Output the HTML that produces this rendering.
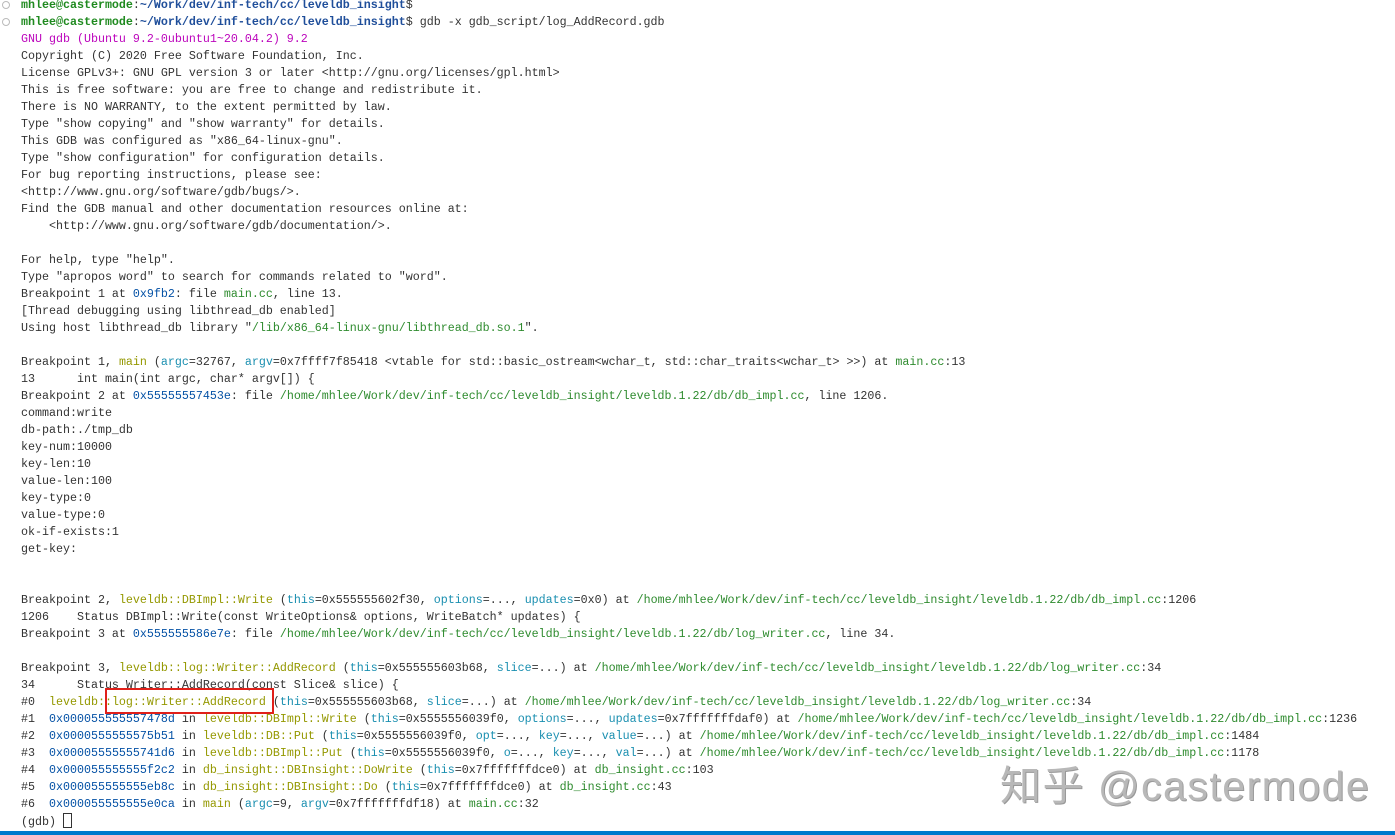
<!DOCTYPE html>
<html><head><meta charset="utf-8"><style>
html,body{margin:0;padding:0;background:#fff;width:1395px;height:835px;overflow:hidden;position:relative}
pre{position:absolute;left:21px;top:-3px;margin:0;font-family:"Liberation Mono",monospace;font-size:11.67px;line-height:17px;color:#333}
.y{color:#949800}.b{color:#0451a5}.g{color:#2e8b2e}.c{color:#1a8fb0}.m{color:#bc05bc}
.u{color:#1f8a1f;font-weight:bold}.p{color:#1f4e9a;font-weight:bold}
.dot{position:absolute;left:2px;width:6px;height:6px;border:1px solid #bbb;border-radius:50%}
.box{position:absolute;left:105px;top:688px;width:165px;height:22px;border:2px solid #e0201a}
.wm{position:absolute;left:1000px;top:752px;font-family:"Liberation Sans","Noto Sans CJK SC",sans-serif;font-size:41px;color:#b8b8b8;text-shadow:1px 1px 0 #999;letter-spacing:1.5px}
.bar{position:absolute;left:0;top:831px;width:1395px;height:4px;background:#007acc}
.cur{display:inline-block;width:7px;height:13px;border:1px solid #333;vertical-align:-3px}
</style></head><body>
<div class="dot" style="top:1px"></div><div class="dot" style="top:18px"></div>
<pre><span class="u">mhlee@castermode</span>:<span class="p">~/Work/dev/inf-tech/cc/leveldb_insight</span>$
<span class="u">mhlee@castermode</span>:<span class="p">~/Work/dev/inf-tech/cc/leveldb_insight</span>$ gdb -x gdb_script/log_AddRecord.gdb
<span class="m">GNU gdb (Ubuntu 9.2-0ubuntu1~20.04.2) 9.2</span>
Copyright (C) 2020 Free Software Foundation, Inc.
License GPLv3+: GNU GPL version 3 or later &lt;http://gnu.org/licenses/gpl.html&gt;
This is free software: you are free to change and redistribute it.
There is NO WARRANTY, to the extent permitted by law.
Type "show copying" and "show warranty" for details.
This GDB was configured as "x86_64-linux-gnu".
Type "show configuration" for configuration details.
For bug reporting instructions, please see:
&lt;http://www.gnu.org/software/gdb/bugs/&gt;.
Find the GDB manual and other documentation resources online at:
    &lt;http://www.gnu.org/software/gdb/documentation/&gt;.

For help, type "help".
Type "apropos word" to search for commands related to "word".
Breakpoint 1 at <span class="b">0x9fb2</span>: file <span class="g">main.cc</span>, line 13.
[Thread debugging using libthread_db enabled]
Using host libthread_db library "<span class="g">/lib/x86_64-linux-gnu/libthread_db.so.1</span>".

Breakpoint 1, <span class="y">main</span> (<span class="c">argc</span>=32767, <span class="c">argv</span>=0x7ffff7f85418 &lt;vtable for std::basic_ostream&lt;wchar_t, std::char_traits&lt;wchar_t&gt; &gt;&gt;) at <span class="g">main.cc</span>:13
13      int main(int argc, char* argv[]) {
Breakpoint 2 at <span class="b">0x55555557453e</span>: file <span class="g">/home/mhlee/Work/dev/inf-tech/cc/leveldb_insight/leveldb.1.22/db/db_impl.cc</span>, line 1206.
command:write
db-path:./tmp_db
key-num:10000
key-len:10
value-len:100
key-type:0
value-type:0
ok-if-exists:1
get-key:


Breakpoint 2, <span class="y">leveldb::DBImpl::Write</span> (<span class="c">this</span>=0x555555602f30, <span class="c">options</span>=..., <span class="c">updates</span>=0x0) at <span class="g">/home/mhlee/Work/dev/inf-tech/cc/leveldb_insight/leveldb.1.22/db/db_impl.cc</span>:1206
1206    Status DBImpl::Write(const WriteOptions&amp; options, WriteBatch* updates) {
Breakpoint 3 at <span class="b">0x555555586e7e</span>: file <span class="g">/home/mhlee/Work/dev/inf-tech/cc/leveldb_insight/leveldb.1.22/db/log_writer.cc</span>, line 34.

Breakpoint 3, <span class="y">leveldb::log::Writer::AddRecord</span> (<span class="c">this</span>=0x555555603b68, <span class="c">slice</span>=...) at <span class="g">/home/mhlee/Work/dev/inf-tech/cc/leveldb_insight/leveldb.1.22/db/log_writer.cc</span>:34
34      Status Writer::AddRecord(const Slice&amp; slice) {
#0  <span class="y">leveldb::log::Writer::AddRecord</span> (<span class="c">this</span>=0x555555603b68, <span class="c">slice</span>=...) at <span class="g">/home/mhlee/Work/dev/inf-tech/cc/leveldb_insight/leveldb.1.22/db/log_writer.cc</span>:34
#1  <span class="b">0x000055555557478d</span> in <span class="y">leveldb::DBImpl::Write</span> (<span class="c">this</span>=0x5555556039f0, <span class="c">options</span>=..., <span class="c">updates</span>=0x7fffffffdaf0) at <span class="g">/home/mhlee/Work/dev/inf-tech/cc/leveldb_insight/leveldb.1.22/db/db_impl.cc</span>:1236
#2  <span class="b">0x0000555555575b51</span> in <span class="y">leveldb::DB::Put</span> (<span class="c">this</span>=0x5555556039f0, <span class="c">opt</span>=..., <span class="c">key</span>=..., <span class="c">value</span>=...) at <span class="g">/home/mhlee/Work/dev/inf-tech/cc/leveldb_insight/leveldb.1.22/db/db_impl.cc</span>:1484
#3  <span class="b">0x00005555555741d6</span> in <span class="y">leveldb::DBImpl::Put</span> (<span class="c">this</span>=0x5555556039f0, <span class="c">o</span>=..., <span class="c">key</span>=..., <span class="c">val</span>=...) at <span class="g">/home/mhlee/Work/dev/inf-tech/cc/leveldb_insight/leveldb.1.22/db/db_impl.cc</span>:1178
#4  <span class="b">0x000055555555f2c2</span> in <span class="y">db_insight::DBInsight::DoWrite</span> (<span class="c">this</span>=0x7fffffffdce0) at <span class="g">db_insight.cc</span>:103
#5  <span class="b">0x000055555555eb8c</span> in <span class="y">db_insight::DBInsight::Do</span> (<span class="c">this</span>=0x7fffffffdce0) at <span class="g">db_insight.cc</span>:43
#6  <span class="b">0x000055555555e0ca</span> in <span class="y">main</span> (<span class="c">argc</span>=9, <span class="c">argv</span>=0x7fffffffdf18) at <span class="g">main.cc</span>:32
(gdb) <span class="cur"></span></pre>
<div class="box"></div>
<div class="wm">知乎 @castermode</div>
<div class="bar"></div>
</body></html>
